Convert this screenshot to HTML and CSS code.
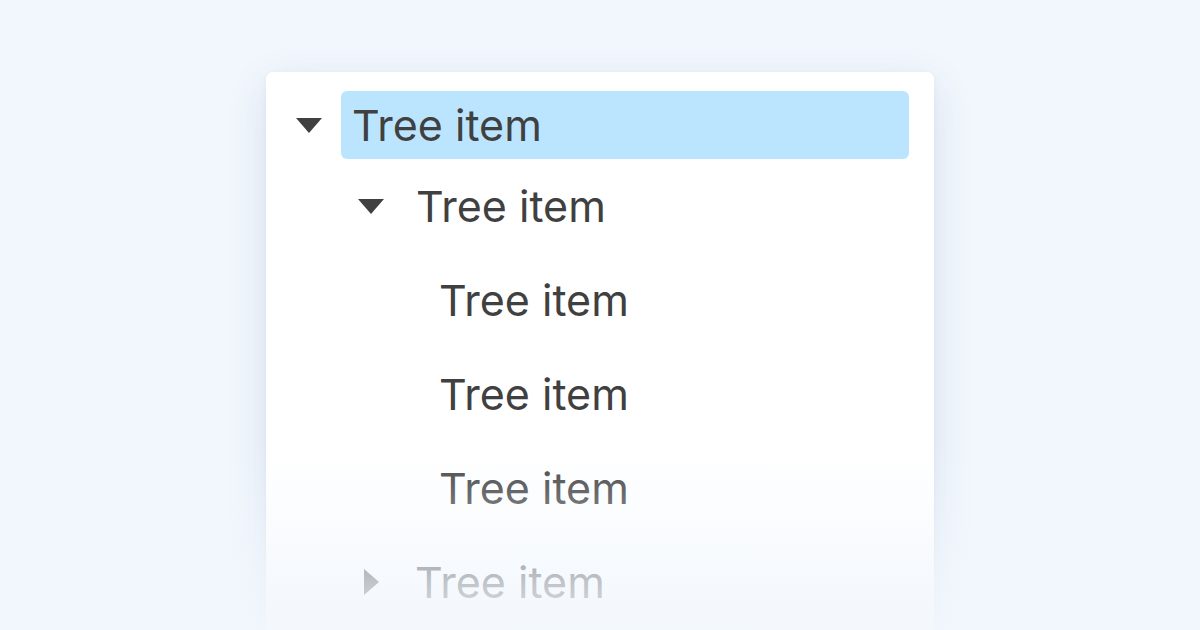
FILE: index.html
```html
<!DOCTYPE html>
<html lang="en">
<head>
<meta charset="utf-8">
<title>Tree view</title>
<link rel="stylesheet" href="styles.css">
</head>
<body>
<div class="stage">
  <div class="panel">
    <div class="row level1 selected">
      <span class="caret down"></span>
      <span class="label">Tree item</span>
    </div>
    <div class="row level2 second">
      <span class="caret down"></span>
      <span class="label">Tree item</span>
    </div>
    <div class="row leaf">
      <span class="label">Tree item</span>
    </div>
    <div class="row leaf">
      <span class="label">Tree item</span>
    </div>
    <div class="row leaf">
      <span class="label">Tree item</span>
    </div>
    <div class="row level2">
      <span class="caret right"></span>
      <span class="label">Tree item</span>
    </div>
  </div>
  <div class="fade"></div>
</div>
</body>
</html>
```

FILE: styles.css
```css
html, body {
  margin: 0;
  padding: 0;
}
body {
  width: 1200px;
  height: 630px;
  overflow: hidden;
  background: #f2f7fd;
  font-family: Inter, "Noto Sans", sans-serif;
  color: #404040;
}
.stage {
  position: relative;
  width: 1200px;
  height: 630px;
  overflow: hidden;
  padding-top: 72px;
  box-sizing: border-box;
  display: flex;
  justify-content: center;
}
.panel {
  width: 668px;
  height: 558px;
  overflow: hidden;
  background: #ffffff;
  border-radius: 7px 7px 0 0;
  box-shadow: 0 12px 40px rgba(40, 70, 120, 0.13), 0 2px 6px rgba(40, 70, 120, 0.05);
  padding: 19px 25px 0 30px;
  box-sizing: border-box;
  display: flex;
  flex-direction: column;
}
.row {
  height: 68px;
  display: flex;
  align-items: center;
  flex-shrink: 0;
  margin-top: 26px;
}
.row.level1 {
  margin-top: 0;
}
.row.second {
  margin-top: 13px;
}
.caret {
  width: 0;
  height: 0;
  flex-shrink: 0;
}
.caret.down {
  border-left: 13px solid transparent;
  border-right: 13px solid transparent;
  border-top: 15px solid #404040;
}
.caret.right {
  border-top: 13px solid transparent;
  border-bottom: 13px solid transparent;
  border-left: 15px solid #404040;
  margin-left: 6px;
}
.label {
  font-size: 43px;
  line-height: 68px;
  letter-spacing: 0;
  white-space: nowrap;
}
.level1 .caret {
  margin-right: 19px;
}
.level1 .label {
  flex: 1;
  background: #bbe5fe;
  border-radius: 6px;
  padding-left: 11px;
}
.level2 {
  padding-left: 62px;
}
.level2 .caret.down {
  margin-right: 32px;
}
.level2 .caret.right {
  margin-right: 36px;
}
.leaf {
  padding-left: 143px;
}
.fade {
  position: absolute;
  left: 0;
  right: 0;
  top: 440px;
  height: 190px;
  background: linear-gradient(to bottom, rgba(242, 247, 253, 0) 0px, rgba(242, 247, 253, 0.2) 48px, rgba(242, 247, 253, 0.72) 142px, rgba(242, 247, 253, 0.9) 190px);
  pointer-events: none;
}
```
